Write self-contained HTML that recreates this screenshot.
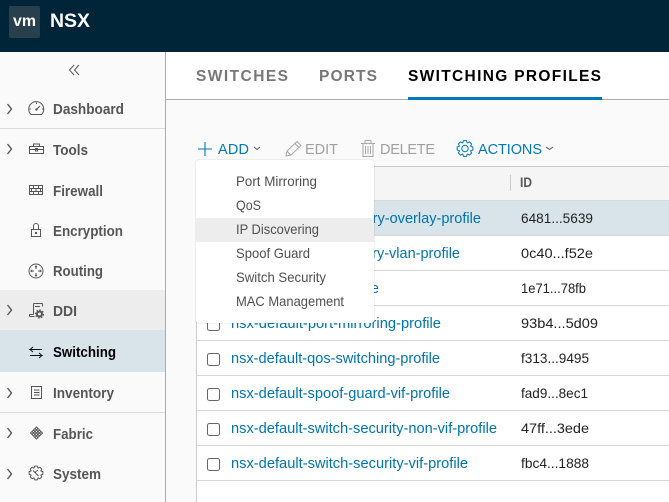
<!DOCTYPE html>
<html><head><meta charset="utf-8"><style>
html,body{margin:0;padding:0;width:669px;height:502px;overflow:hidden;background:#fafafa}
svg{display:block}
text{font-family:"Liberation Sans",sans-serif}
.n{font-size:14.5px;font-weight:700;fill:#565656}
.tab{font-size:15.5px;font-weight:700;fill:#777}
.tb{font-size:14.5px;fill:#0079b8}
.dis{font-size:14.5px;fill:#a0a0a0}
.m{font-size:14px;fill:#4f4f4f}
.l{font-size:14.3px;fill:#0074ad}
.i{font-size:14px;fill:#222}
.ic{fill:none;stroke:#565656;stroke-width:1}
.ck{fill:#fff;stroke:#666;stroke-width:1}
.ch{fill:none;stroke:#565656;stroke-width:1.4}
</style></head><body>
<svg width="669" height="502" viewBox="0 0 669 502" xmlns="http://www.w3.org/2000/svg">
<rect width="669" height="502" fill="#fafafa"/>
<rect width="669" height="52" fill="#002538"/>
<rect x="166" y="52" width="503" height="47" fill="#fff"/>
<rect x="9" y="6" width="31" height="32" rx="2" fill="#28404d"/>
<text x="13" y="26" font-size="16" font-weight="700" fill="#fff" textLength="23" lengthAdjust="spacingAndGlyphs">vm</text>
<text x="50" y="27" font-size="19" font-weight="700" fill="#fff" textLength="40" lengthAdjust="spacingAndGlyphs">NSX</text>

<rect x="165" y="52" width="1" height="450" fill="#ababab"/>
<rect x="0" y="290" width="165" height="40" fill="#ededed"/>
<rect x="0" y="330" width="165" height="42" fill="#d9e4ea"/>
<rect x="0" y="128" width="165" height="1" fill="#dcdcdc"/>
<rect x="0" y="412" width="165" height="1" fill="#dcdcdc"/>
<path class="ic" stroke-width="1.100" d="M74 65l-4.500 5 4.500 5M79 65l-4.500 5 4.500 5"/>

<path class="ch" d="M7.500 104l4 5-4 5M7.500 144l4 5-4 5M7.500 305l4 5-4 5M7.500 388l4 5-4 5M7.500 428l4 5-4 5M7.500 469l4 5-4 5"/>

<g lengthAdjust="spacingAndGlyphs">
<text class="n" x="53" y="114" textLength="71" lengthAdjust="spacingAndGlyphs">Dashboard</text>
<text class="n" x="53" y="155" textLength="35" lengthAdjust="spacingAndGlyphs">Tools</text>
<text class="n" x="53" y="196" textLength="50" lengthAdjust="spacingAndGlyphs">Firewall</text>
<text class="n" x="53" y="236" textLength="70" lengthAdjust="spacingAndGlyphs">Encryption</text>
<text class="n" x="53" y="276" textLength="50" lengthAdjust="spacingAndGlyphs">Routing</text>
<text class="n" x="53" y="316" textLength="24" lengthAdjust="spacingAndGlyphs">DDI</text>
<text class="n" x="53" y="357" textLength="63" lengthAdjust="spacingAndGlyphs" style="fill:#000">Switching</text>
<text class="n" x="53" y="398" textLength="61" lengthAdjust="spacingAndGlyphs">Inventory</text>
<text class="n" x="53" y="439" textLength="40" lengthAdjust="spacingAndGlyphs">Fabric</text>
<text class="n" x="53" y="479" textLength="48" lengthAdjust="spacingAndGlyphs">System</text>
</g>

<!-- dashboard -->
<path class="ic" d="M31 114.500a7.500 7.500 0 1 1 10.500 0zM36.500 109.500l3.500-3.500M36.500 102.500v1.500M29.500 109h1.500M42 109h1.500"/><circle cx="36.500" cy="109.500" r="1.200" fill="#565656"/>
<!-- tools -->
<path class="ic" d="M29.500 146.500h14v7h-14zM29.500 149.500h14M33.500 146.500v-2.500h6v2.500M35.500 148.500h2v2.500h-2z"/>
<!-- firewall -->
<path class="ic" d="M29.500 185.500h13v9h-13zM29.500 188.500h13M29.500 191.500h13M33.500 185.500v3M38.500 185.500v3M31.500 188.500v3M36 188.500v3M40.500 188.500v3M33.500 191.500v3M38.500 191.500v3"/>
<!-- lock -->
<path class="ic" d="M31.500 229.500h9v7h-9zM33.500 229.500v-3.500a2.500 2.500 0 0 1 5 0v3.500"/><circle cx="36" cy="233" r="1.200" fill="#565656"/>
<!-- routing -->
<circle class="ic" cx="36" cy="271" r="7"/><path class="ic" d="M36 266v3M36 273v3M31 271h3M38 271h3M35 267l1-1 1 1M35 275l1 1 1-1M32 270l-1 1 1 1M40 270l1 1-1 1"/>
<!-- ddi -->
<path class="ic" d="M33.500 303.500h9M33.500 303.500v11M29.500 316.500h5M29.500 316.500v-2h4M42.500 303.500v3M35 306.500h5"/><circle cx="39.500" cy="314" r="2.500" fill="none" stroke="#565656" stroke-width="2"/><circle cx="39.500" cy="314" r="4" fill="none" stroke="#565656" stroke-width="1.200" stroke-dasharray="1.500 1.600"/>
<!-- switching -->
<path d="M42 349.500H30l3-2.500m-3 2.500l3 2.500M30 355.500h12l-3-2.500m3 2.500l-3 2.500" fill="none" stroke="#111" stroke-width="1"/>
<!-- inventory -->
<path class="ic" d="M31.500 386.500h10v12h-10zM34 390h5.500M34 392.500h5.500M34 395h5.500"/>
<!-- fabric -->
<path class="ic" stroke-width=".8" d="M36.500 427l6 6-6 6-6-6zM33.500 430l6 6M35 428.500l6 6M32 431.500l6 6M39.500 430l-6 6M38 428.500l-6 6M41 431.500l-6 6"/>
<!-- system -->
<path class="ic" transform="translate(36 473)" stroke-width="1.100" stroke-linejoin="round" d="M6.870-1.340L6.870 1.340 5.100 1.860 4.920 2.290 5.800 3.910 3.910 5.800 2.290 4.920 1.860 5.100 1.340 6.870 -1.340 6.870 -1.860 5.100 -2.290 4.920 -3.910 5.800 -5.800 3.910 -4.920 2.290 -5.100 1.860 -6.870 1.340 -6.870 -1.340 -5.100 -1.860 -4.920 -2.290 -5.800 -3.910 -3.910 -5.800 -2.290 -4.920 -1.860 -5.100 -1.340 -6.870 1.340 -6.870 1.860 -5.100 2.290 -4.920 3.910 -5.800 5.800 -3.910 4.920 -2.290 5.100 -1.860Z"/>
<path class="ic" d="M33 470.500l5.500 5.500M38 470.500a2.500 2.500 0 0 0-2.500 2.500"/>

<!-- tabs -->
<rect x="166" y="99" width="503" height="1" fill="#ababab"/>
<rect x="408" y="97" width="194" height="3" fill="#0079b8"/>
<text class="tab" x="196" y="81" textLength="92">SWITCHES</text>
<text class="tab" x="319" y="81" textLength="58">PORTS</text>
<text class="tab" x="408" y="81" textLength="193" style="fill:#000">SWITCHING PROFILES</text>

<!-- toolbar -->
<path d="M198 149h14M205 142v14" stroke="#0079b8" fill="none" stroke-width="1.100"/>
<text class="tb" x="218" y="154" textLength="31">ADD</text>
<path d="M254 147l3 2.500 3-2.500" fill="none" stroke="#565656"/>
<path d="M286 156l1-5 10-9.500 4 4-10 9.500zM287 151l4 4.500M295 143.500l4 4" fill="none" stroke="#a8a8a8" stroke-width="1"/>
<text class="dis" x="305" y="154" textLength="33">EDIT</text>
<path d="M361 143.500h14M365 143.500v-3h6v3M363 143.500v13h10v-13M365.500 146v8M368 146v8M370.500 146v8" fill="none" stroke="#a8a8a8"/>
<text class="dis" x="380" y="154" textLength="55">DELETE</text>
<path transform="translate(465 148.500)" fill="none" stroke="#0079b8" stroke-linejoin="round" d="M7.850-1.530L7.850 1.530 5.830 2.120 5.620 2.620 6.630 4.470 4.470 6.630 2.620 5.620 2.120 5.830 1.530 7.850 -1.530 7.850 -2.120 5.830 -2.620 5.620 -4.470 6.630 -6.630 4.470 -5.620 2.620 -5.830 2.120 -7.850 1.530 -7.850 -1.530 -5.830 -2.120 -5.620 -2.620 -6.630 -4.470 -4.470 -6.630 -2.620 -5.620 -2.120 -5.830 -1.530 -7.850 1.530 -7.850 2.120 -5.830 2.620 -5.620 4.470 -6.630 6.630 -4.470 5.620 -2.620 5.830 -2.120Z"/>
<circle cx="465" cy="148.500" r="3.200" fill="none" stroke="#0079b8"/>
<text class="tb" x="478" y="154" textLength="64">ACTIONS</text>
<path d="M546 147l3.500 2.500 3.500-2.500" fill="none" stroke="#565656"/>

<!-- table -->
<rect x="196.500" y="166.500" width="473" height="340" fill="#fff" stroke="#ccc"/>
<rect x="197" y="167" width="472" height="33" fill="#f5f5f5"/>
<rect x="197" y="201" width="472" height="34" fill="#d9e4ea"/>
<path d="M197 200.500h472M197 235.500h472M197 270.500h472M197 305.500h472M197 340.500h472M197 375.500h472M197 410.500h472M197 445.500h472M197 480.500h472" stroke="#d7d7d7" fill="none"/>
<rect x="510" y="175" width="1" height="16" fill="#ccc"/>
<text x="520" y="187" font-size="14" font-weight="700" fill="#565656" textLength="12" lengthAdjust="spacingAndGlyphs">ID</text>

<g>
<rect class="ck" x="207.500" y="318.500" width="12" height="12" rx="2"/>
<rect class="ck" x="207.500" y="353.500" width="12" height="12" rx="2"/>
<rect class="ck" x="207.500" y="388.500" width="12" height="12" rx="2"/>
<rect class="ck" x="207.500" y="423.500" width="12" height="12" rx="2"/>
<rect class="ck" x="207.500" y="458.500" width="12" height="12" rx="2"/>
</g>
<text class="l" x="231" y="223" textLength="250" lengthAdjust="spacingAndGlyphs">nsx-default-ip-discovery-overlay-profile</text>
<text class="l" x="231" y="258" textLength="229" lengthAdjust="spacingAndGlyphs">nsx-default-ip-discovery-vlan-profile</text>
<text class="l" x="231" y="293" textLength="148" lengthAdjust="spacingAndGlyphs">nsx-default-mac-profile</text>
<text class="l" x="231" y="328" textLength="210" lengthAdjust="spacingAndGlyphs">nsx-default-port-mirroring-profile</text>
<text class="l" x="231" y="363" textLength="209" lengthAdjust="spacingAndGlyphs">nsx-default-qos-switching-profile</text>
<text class="l" x="231" y="398" textLength="219" lengthAdjust="spacingAndGlyphs">nsx-default-spoof-guard-vif-profile</text>
<text class="l" x="231" y="433" textLength="266" lengthAdjust="spacingAndGlyphs">nsx-default-switch-security-non-vif-profile</text>
<text class="l" x="231" y="468" textLength="237" lengthAdjust="spacingAndGlyphs">nsx-default-switch-security-vif-profile</text>

<text class="i" x="521" y="223" textLength="72" lengthAdjust="spacingAndGlyphs">6481...5639</text>
<text class="i" x="521" y="258" textLength="72" lengthAdjust="spacingAndGlyphs">0c40...f52e</text>
<text class="i" x="521" y="293" textLength="65" lengthAdjust="spacingAndGlyphs">1e71...78fb</text>
<text class="i" x="521" y="328" textLength="77" lengthAdjust="spacingAndGlyphs">93b4...5d09</text>
<text class="i" x="521" y="363" textLength="68" lengthAdjust="spacingAndGlyphs">f313...9495</text>
<text class="i" x="521" y="398" textLength="67" lengthAdjust="spacingAndGlyphs">fad9...8ec1</text>
<text class="i" x="521" y="433" textLength="68" lengthAdjust="spacingAndGlyphs">47ff...3ede</text>
<text class="i" x="521" y="468" textLength="68" lengthAdjust="spacingAndGlyphs">fbc4...1888</text>

<!-- dropdown -->
<rect x="195" y="159" width="180" height="165" rx="4" fill="#000" opacity=".05"/>
<rect x="196" y="160" width="178" height="163" rx="3" fill="#fff"/>
<rect x="196" y="218" width="178" height="24" fill="#ededed"/>
<text class="m" x="236" y="186" textLength="81" lengthAdjust="spacingAndGlyphs">Port Mirroring</text>
<text class="m" x="236" y="210" textLength="25" lengthAdjust="spacingAndGlyphs">QoS</text>
<text class="m" x="236" y="234" textLength="83" lengthAdjust="spacingAndGlyphs">IP Discovering</text>
<text class="m" x="236" y="258" textLength="74" lengthAdjust="spacingAndGlyphs">Spoof Guard</text>
<text class="m" x="236" y="282" textLength="90" lengthAdjust="spacingAndGlyphs">Switch Security</text>
<text class="m" x="236" y="306" textLength="108" lengthAdjust="spacingAndGlyphs">MAC Management</text>
</svg>
</body></html>
